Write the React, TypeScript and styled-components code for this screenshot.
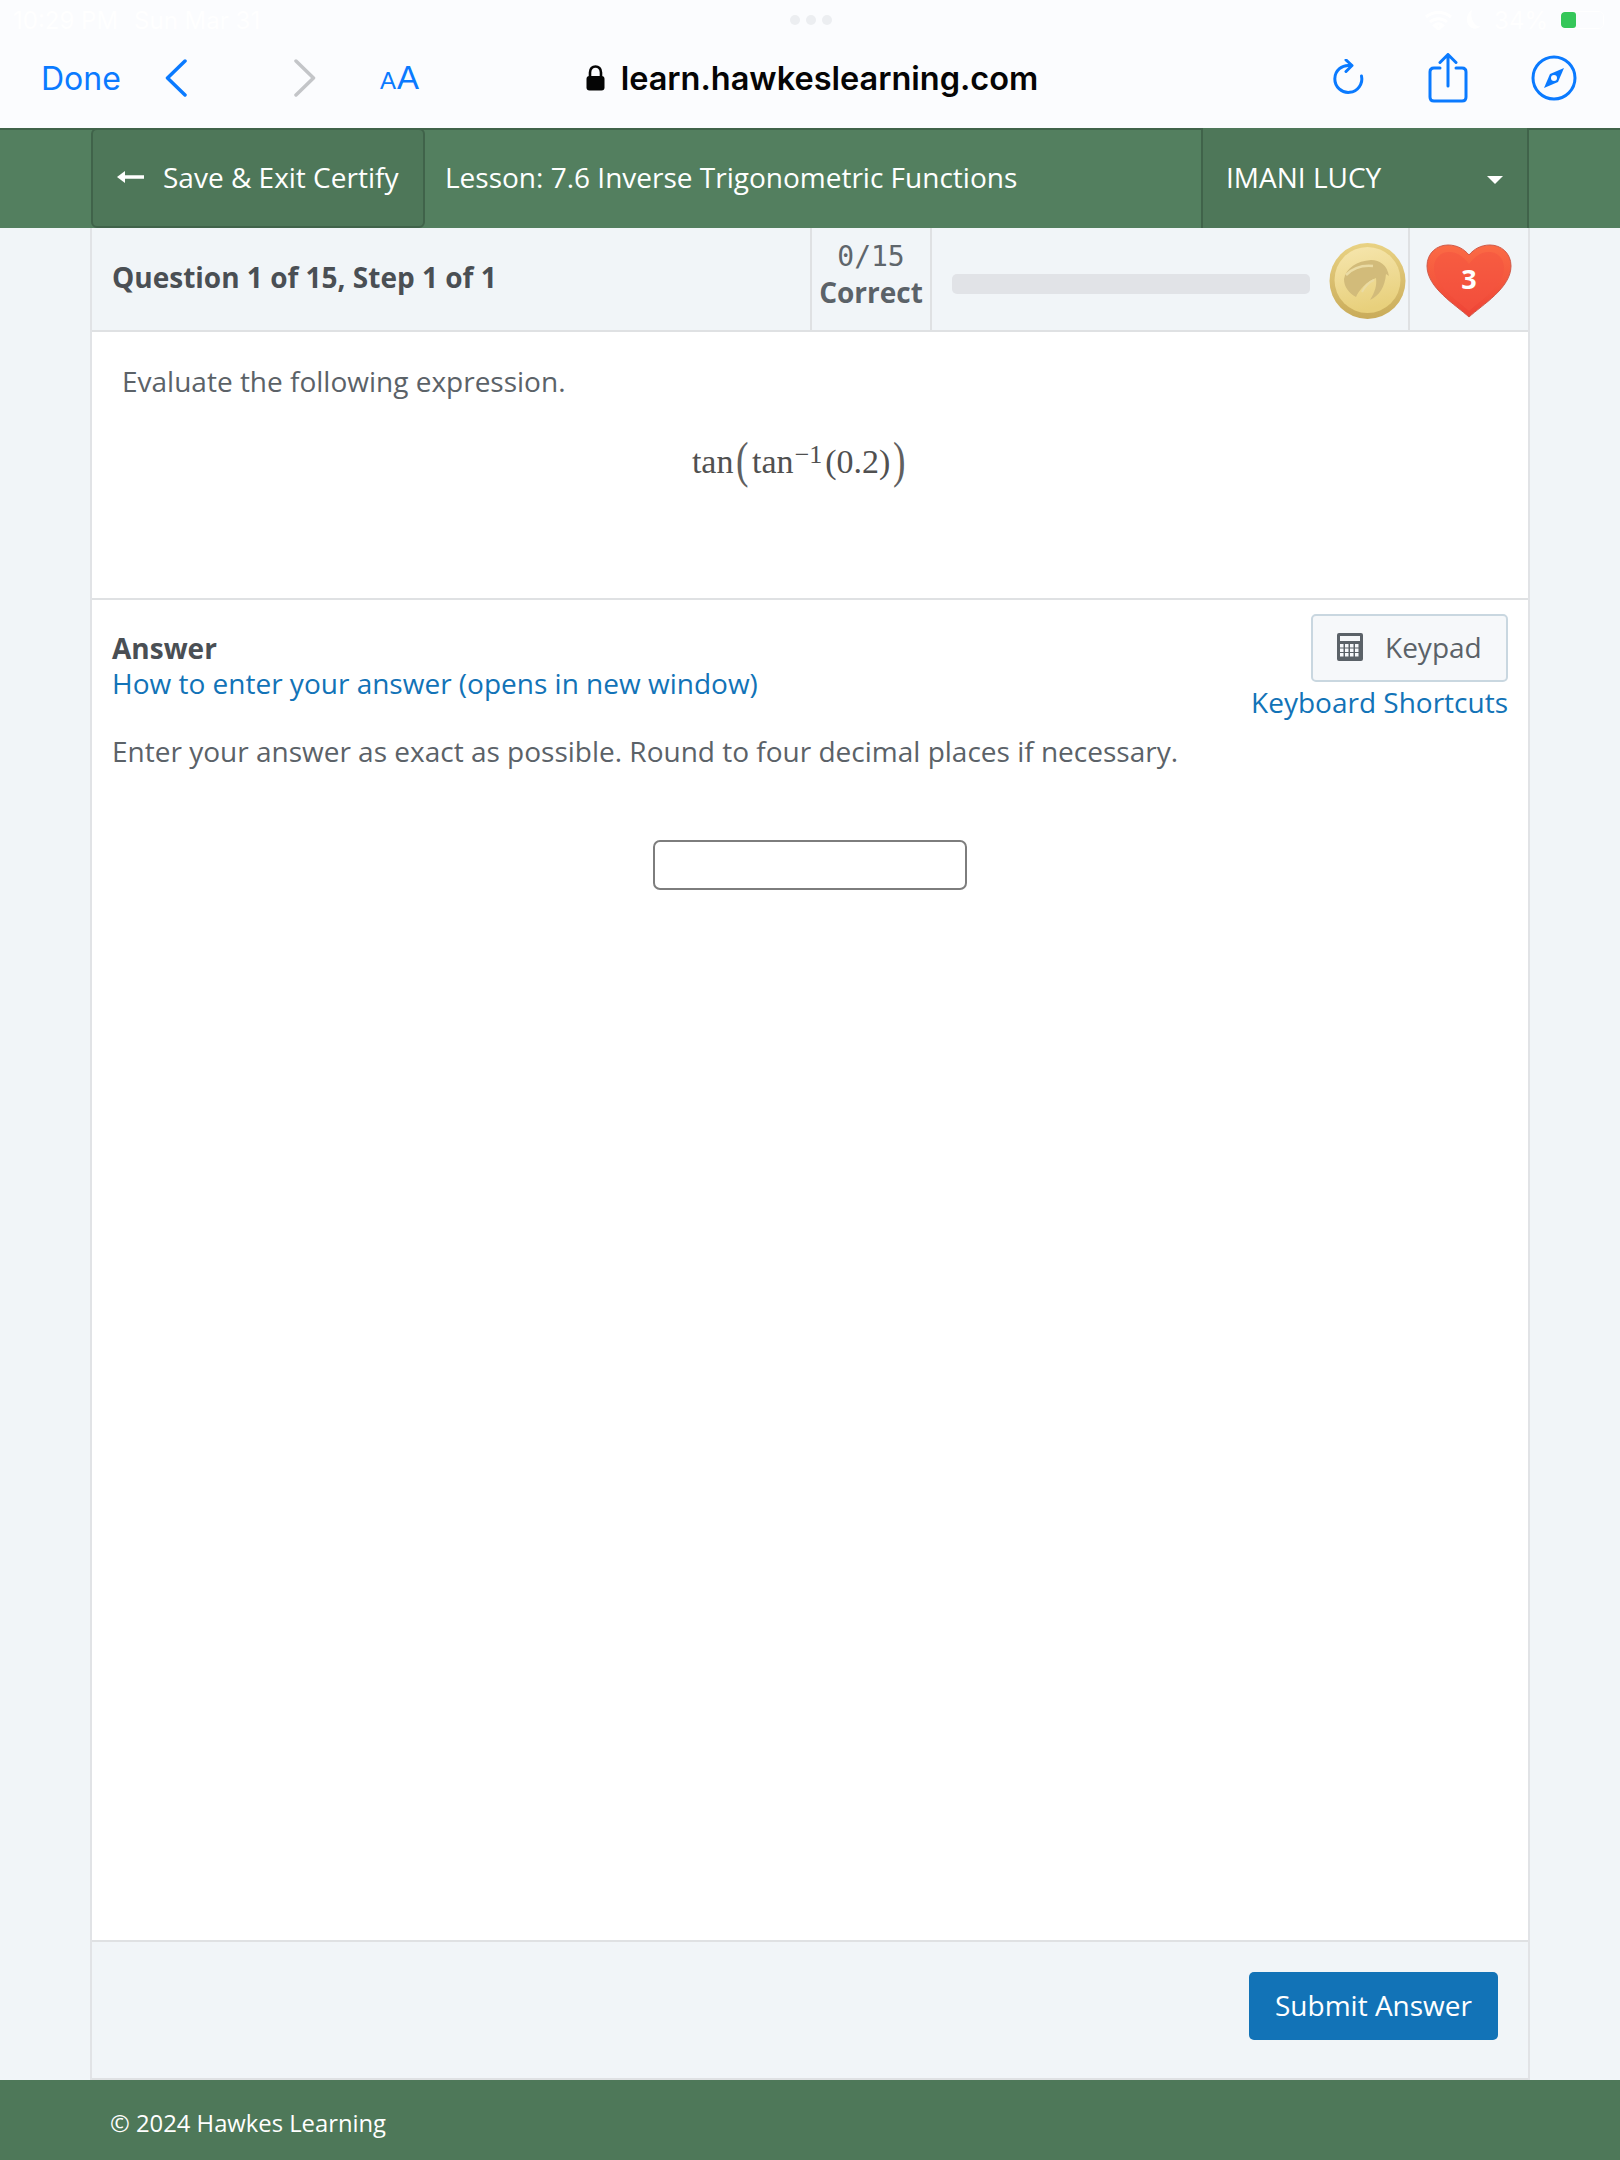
import React from "react";
import styled, { createGlobalStyle } from "styled-components";

const Global = createGlobalStyle`
  html, body { margin: 0; padding: 0; background: #f1f5f8; }
  * { box-sizing: border-box; }
`;
const Page = styled.div`
  width: 1620px; height: 2160px; display: flex; flex-direction: column;
  font-family: "Open Sans", "Liberation Sans", sans-serif; color: #5b6268; background: #f1f5f8; overflow: hidden;
`;
const Browser = styled.div`
  height: 128px; flex: none; background: #fbfcfe; display: flex; flex-direction: column;
  font-family: Inter, "Liberation Sans", sans-serif;
`;
const StatusBar = styled.div`
  height: 40px; display: flex; align-items: center; justify-content: space-between; padding: 0 0 0 13px;
  color: #fff; font-size: 24px;
`;
const StatusLeft = styled.div`display: flex; gap: 16px; width: 400px;`;
const Dots = styled.div`display: flex; gap: 6px; margin-left: -12px;`;
const Dot = styled.i`width: 10px; height: 10px; border-radius: 50%; background: #eceef1; display: block;`;
const StatusRight = styled.div`display: flex; align-items: center; justify-content: flex-end; width: 400px; gap: 12px; padding-right: 16px;`;
const Battery = styled.div`width: 44px; height: 18px; border: 1px solid #fff; border-radius: 5px; overflow: hidden; display:flex;`;
const BatteryFill = styled.div`width: 15px; background: #35c759; border-radius: 3px;`;
const Toolbar = styled.div`flex: 1; display: flex; align-items: center; padding: 0 43px 10px 41px; margin-top: -2px;`;
const Done = styled.span`color: #0a7aff; font-size: 32px; width: 123px;`;
const NavIcon = styled.svg<{ $w: number; $gap?: number }>`flex: none; width: ${(p) => p.$w}px; display: block; margin-left: ${(p) => p.$gap ?? 0}px;`;
const TextSize = styled.span`color: #0a7aff; margin-left: 63px; width: 46px; display: flex; align-items: baseline; font-size: 33px; font-family: "Liberation Sans", sans-serif;`;
const SmallA = styled.span`font-size: 24px; margin-right: 1px;`;
const Url = styled.div`flex: 1; display: flex; justify-content: center; align-items: center; gap: 16px; color: #050505; font-weight: 600; font-size: 32.5px; padding-right: 133px;`;
const RightTools = styled.div`display: flex; align-items: center; gap: 63px;`;

const Header = styled.div`
  height: 100px; flex: none; background: #537f5f; border-top: 2px solid #40634a; padding: 0 91px; color: #fff; font-size: 28px; display: flex;
`;
const ExitButton = styled.div`
  width: 334px; margin-top: -2px; padding: 0 0 3px 24px; background: #4e7759; border: 2px solid #40634a; border-radius: 6px;
  display: flex; align-items: center; gap: 18px; white-space: nowrap;
`;
const LessonTitle = styled.div`flex: 1; display: flex; align-items: center; padding: 0 0 4px 20px; white-space: nowrap;`;
const UserMenu = styled.div`
  width: 328px; margin-top: -2px; background: #4e7759; border-left: 2px solid #40634a; border-right: 2px solid #40634a;
  display: flex; align-items: center; justify-content: space-between; padding: 0 24px 3px 23px;
`;
const Caret = styled.i`width: 0; height: 0; border-left: 8px solid transparent; border-right: 8px solid transparent; border-top: 8px solid #fff; display: block; margin-top: 6px;`;

const Card = styled.div`
  flex: 1; margin: 0 90px 0 90px; border-left: 2px solid #e1e3e6; border-right: 2px solid #e1e3e6; display: flex; flex-direction: column; background: #fff;
`;
const QuestionBar = styled.div`
  height: 104px; flex: none; background: #f1f5f8; border-bottom: 2px solid #dfe1e3; display: flex; align-items: stretch;
`;
const QuestionTitle = styled.div`
  width: 718px; display: flex; align-items: center; padding-left: 20px; font-weight: 700; font-size: 28px; color: #4a4f54; margin-top: -4px;
`;
const Score = styled.div`
  width: 122px; border-left: 2px solid #dfe1e3; border-right: 2px solid #dfe1e3; display: flex; flex-direction: column; align-items: center; padding-top: 11px;
`;
const ScoreNum = styled.span`font-family: "DejaVu Sans Mono", "Liberation Mono", monospace; font-size: 28px; line-height: 35px; color: #5f666c;`;
const ScoreLabel = styled.span`font-weight: 700; font-size: 28px; line-height: 36px; color: #5b6268;`;
const Progress = styled.div`flex: 1; display: flex; align-items: center; justify-content: space-between; padding: 0 1px 0 20px;`;
const ProgressTrack = styled.div`width: 358px; height: 20px; background: #e1e3e7; border-radius: 5px; margin-top: 10px;`;
const CoinWrap = styled.div`width: 78px; display: flex; justify-content: flex-start; padding: 4px 0 0 0;`;
const Lives = styled.div`width: 120px; border-left: 2px solid #dfe1e3; display: flex; align-items: center; justify-content: center; position: relative; padding: 4px 1px 0 0;`;
const LivesCount = styled.span`position: absolute; left: 0; right: 0; top: 33px; text-align: center; color: #fff; font-weight: 700; font-size: 27px; line-height: 36px;`;

const Question = styled.div`
  height: 268px; flex: none; border-bottom: 2px solid #dfe1e3; padding: 29px 0 0 30px; font-size: 28px; line-height: 40px;
`;
const MathLine = styled.div`
  display: flex; justify-content: center; align-items: center; margin-top: 35px; padding-right: 49px; font-family: "Liberation Serif", serif; font-size: 34px; color: #505050; height: 52px;
`;
const BigParen = styled.span`font-size: 50px; font-weight: 400; line-height: 52px; transform: scaleX(0.75); display: inline-block; margin: -4px 1px 0; color: #606060;`;
const Sup = styled.sup`font-size: 26px; line-height: 0; position: relative; top: -7px; vertical-align: super; margin: 0 3px 0 1px;`;

const AnswerArea = styled.div`flex: 1; padding: 14px 20px 0 20px; display: flex; flex-direction: column;`;
const AnswerHead = styled.div`display: flex; justify-content: space-between; align-items: flex-start;`;
const AnswerText = styled.div`display: flex; flex-direction: column; padding-top: 16px;`;
const AnswerLabel = styled.span`font-weight: 700; font-size: 28px; line-height: 36px; color: #4a4f54;`;
const HelpLink = styled.a`color: #1273b7; font-size: 28px; line-height: 35px;`;
const KeypadCol = styled.div`display: flex; flex-direction: column; align-items: flex-end;`;
const KeypadButton = styled.div`
  width: 197px; height: 68px; background: #f6f8fa; border: 2px solid #c9d7e0; border-radius: 5px; display: flex; align-items: center; gap: 22px; padding: 0 0 2px 24px; font-size: 28px; color: #5b6268;
`;
const ShortcutLink = styled.a`color: #1273b7; font-size: 28px; line-height: 36px; margin-top: 2px;`;
const Instructions = styled.div`font-size: 28px; line-height: 40px; margin-top: 11px;`;
const InputRow = styled.div`display: flex; justify-content: center; margin-top: 69px;`;
const AnswerInput = styled.div`width: 314px; height: 50px; background: #fff; border: 2px solid #7d7d7d; border-radius: 7px;`;

const SubmitBar = styled.div`
  height: 140px; flex: none; background: #f1f5f8; border-top: 2px solid #dfe1e3; border-bottom: 2px solid #dfe1e3; display: flex; justify-content: flex-end; align-items: flex-start; padding: 30px 30px 0 0;
`;
const SubmitButton = styled.div`
  width: 249px; height: 68px; background: #1273b7; color: #fff; border-radius: 5px; display: flex; align-items: center; justify-content: center; font-size: 28px; padding-bottom: 2px;
`;
const Footer = styled.div`
  height: 80px; flex: none; background: #4e7859; color: #fff; font-size: 23.8px; display: flex; align-items: center; padding: 5px 0 0 110px;
`;

const Stroke = { fill: "none", stroke: "#0a7aff", strokeWidth: 3, strokeLinecap: "round", strokeLinejoin: "round" } as const;

const Coin = () => (
  <svg width="78" height="78" viewBox="0 0 78 78">
    <defs>
      <linearGradient id="coinRim" x1="0" y1="0" x2="0" y2="1">
        <stop offset="0" stopColor="#e9d283" />
        <stop offset="1" stopColor="#c9ab5a" />
      </linearGradient>
      <linearGradient id="coinFace" x1="0" y1="0" x2="0.2" y2="1">
        <stop offset="0" stopColor="#f6e6ae" />
        <stop offset="1" stopColor="#e8d07c" />
      </linearGradient>
    </defs>
    <circle cx="38.5" cy="39" r="38" fill="url(#coinRim)" />
    <circle cx="38.5" cy="38" r="33" fill="url(#coinFace)" />
    <path d="M15 37C17 26 28 19 42 18C51 18 58 23 60 34L57 32C56 45 50 54 41 58C46 50 48 43 47 36C38 39 30 48 27 55C20 51 15 45 15 37Z" fill="#d2bb7a" />
    <path d="M17 33C24 26 34 23 44 24" fill="none" stroke="#eadba4" strokeWidth="2.5" />
    <path d="M33 50C36 44 40 40 45 38" fill="none" stroke="#eadba4" strokeWidth="2" />
  </svg>
);

const Heart = () => (
  <svg width="86" height="74" viewBox="0 0 86 74">
    <defs>
      <linearGradient id="heartFill" x1="0" y1="0" x2="0" y2="1">
        <stop offset="0" stopColor="#fb6b45" />
        <stop offset="1" stopColor="#ee4336" />
      </linearGradient>
    </defs>
    <path d="M43 73C30 61 1 44 1 22C1 9 11 1 22 1C31 1 38 5 43 11C48 5 55 1 64 1C75 1 85 9 85 22C85 44 56 61 43 73Z" fill="url(#heartFill)" stroke="#cf5b4b" strokeWidth="1" />
    <path d="M43 67C32 57 8 42 8 24C8 15 14 8 23 8C31 8 38 13 43 20C48 13 55 8 63 8C72 8 78 15 78 24C78 42 54 57 43 67Z" fill="#f4543f" opacity="0.55" />
  </svg>
);

export default function App() {
  return (
    <Page>
      <Global />
      <Browser>
        <StatusBar>
          <StatusLeft>
            <span>10:29 PM</span>
            <span>Sun Mar 31</span>
          </StatusLeft>
          <Dots>
            <Dot />
            <Dot />
            <Dot />
          </Dots>
          <StatusRight>
            <svg width="27" height="20" viewBox="0 0 27 20">
              <path d="M1 7C8 1 19 1 26 7M5 12C10 7.500 17 7.500 22 12M13.500 19L9.500 15.500C12 13.500 15 13.500 17.500 15.500Z" fill="none" stroke="#fff" strokeWidth="3" />
            </svg>
            <svg width="18" height="22" viewBox="0 0 16 20">
              <path d="M7 1C2 4 1 12 5 16C8 19 12 18 15 16C9 16 5 9 7 1Z" fill="#fff" />
            </svg>
            <span>34%</span>
            <Battery>
              <BatteryFill />
            </Battery>
          </StatusRight>
        </StatusBar>
        <Toolbar>
          <Done>Done</Done>
          <NavIcon $w={25} height="38" viewBox="0 0 25 38">
            <path d="M21 2L3.500 19L21 36" {...Stroke} strokeWidth={3.500} />
          </NavIcon>
          <NavIcon $w={25} $gap={103} height="38" viewBox="0 0 25 38">
            <path d="M4 2L21.500 19L4 36" {...Stroke} stroke="#c3c5c8" strokeWidth={3.500} />
          </NavIcon>
          <TextSize>
            <SmallA>A</SmallA>A
          </TextSize>
          <Url>
            <svg width="19" height="26" viewBox="0 0 19 26">
              <path d="M4 12V7.500C4 3.500 6.500 1.500 9.500 1.500C12.500 1.500 15 3.500 15 7.500V12" fill="none" stroke="#050505" strokeWidth="2.600" />
              <rect x="0.500" y="11" width="18" height="14.500" rx="3" fill="#050505" />
            </svg>
            <span>learn.hawkeslearning.com</span>
          </Url>
          <RightTools>
            <svg width="34" height="38" viewBox="0 0 34 38">
              <path d="M19 6.500A13.500 13.500 0 1 0 30.500 17" {...Stroke} />
              <path d="M15 1L21 6.500L15 12.500" {...Stroke} />
            </svg>
            <svg width="40" height="50" viewBox="0 0 40 50">
              <path d="M12 15H6C3.500 15 2 16.500 2 19V44C2 46.500 3.500 48 6 48H34C36.500 48 38 46.500 38 44V19C38 16.500 36.500 15 34 15H28" {...Stroke} />
              <path d="M20 33V2M12 9.500L20 1.500L28 9.500" {...Stroke} />
            </svg>
            <svg width="46" height="46" viewBox="0 0 46 46">
              <circle cx="23" cy="23" r="21" {...Stroke} />
              <path d="M33 13L19 19L13 33L27 27Z" fill="#0a7aff" />
              <circle cx="23" cy="23" r="3" fill="#fbfcfe" />
            </svg>
          </RightTools>
        </Toolbar>
      </Browser>
      <Header>
        <ExitButton>
          <svg width="28" height="14" viewBox="0 0 28 14">
            <path d="M27 7H6" stroke="#fff" strokeWidth="3.500" />
            <path d="M0 7L8 1V13Z" fill="#fff" />
          </svg>
          <span>Save &amp; Exit Certify</span>
        </ExitButton>
        <LessonTitle>Lesson: 7.6 Inverse Trigonometric Functions</LessonTitle>
        <UserMenu>
          <span>IMANI LUCY</span>
          <Caret />
        </UserMenu>
      </Header>
      <Card>
        <QuestionBar>
          <QuestionTitle>Question 1 of 15, Step 1 of 1</QuestionTitle>
          <Score>
            <ScoreNum>0/15</ScoreNum>
            <ScoreLabel>Correct</ScoreLabel>
          </Score>
          <Progress>
            <ProgressTrack />
            <CoinWrap>
              <Coin />
            </CoinWrap>
          </Progress>
          <Lives>
            <Heart />
            <LivesCount>3</LivesCount>
          </Lives>
        </QuestionBar>
        <Question>
          Evaluate the following expression.
          <MathLine>
            <span>tan</span>
            <BigParen>(</BigParen>
            <span>tan</span>
            <Sup>−1</Sup>
            <span>(0.2)</span>
            <BigParen>)</BigParen>
          </MathLine>
        </Question>
        <AnswerArea>
          <AnswerHead>
            <AnswerText>
              <AnswerLabel>Answer</AnswerLabel>
              <HelpLink>How to enter your answer (opens in new window)</HelpLink>
            </AnswerText>
            <KeypadCol>
              <KeypadButton>
                <svg width="26" height="28" viewBox="0 0 26 28">
                  <path fillRule="evenodd" d="M2 0H24A2 2 0 0 1 26 2V26A2 2 0 0 1 24 28H2A2 2 0 0 1 0 26V2A2 2 0 0 1 2 0ZM3 3V8H23V3Z" fill="#5b6268" />
                  <g fill="#f6f8fa">
                    {[11, 15.500, 20].map((y) =>
                      [3, 8, 13, 18].map((x) => <rect key={`${x}-${y}`} x={x} y={y} width="3.500" height="3.500" />)
                    )}
                  </g>
                </svg>
                <span>Keypad</span>
              </KeypadButton>
              <ShortcutLink>Keyboard Shortcuts</ShortcutLink>
            </KeypadCol>
          </AnswerHead>
          <Instructions>Enter your answer as exact as possible. Round to four decimal places if necessary.</Instructions>
          <InputRow>
            <AnswerInput />
          </InputRow>
        </AnswerArea>
        <SubmitBar>
          <SubmitButton>Submit Answer</SubmitButton>
        </SubmitBar>
      </Card>
      <Footer>© 2024 Hawkes Learning</Footer>
    </Page>
  );
}
